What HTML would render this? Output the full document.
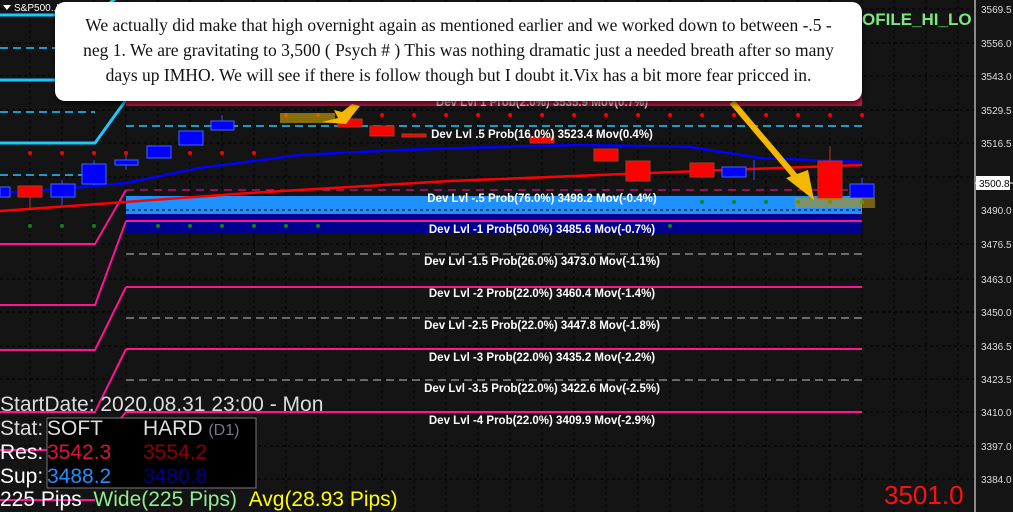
<!DOCTYPE html>
<html><head><style>
html,body{margin:0;padding:0;background:#141414;}
#w{position:relative;width:1013px;height:512px;overflow:hidden;background:#141414;font-family:"Liberation Sans",sans-serif;}
.t{position:absolute;white-space:nowrap;}
</style></head><body><div id="w">
<svg width="1013" height="512" style="position:absolute;left:0;top:0" font-family="Liberation Sans, sans-serif">
<g stroke="#000" stroke-width="1" stroke-dasharray="3,3">
<line x1="30" y1="0" x2="30" y2="512"/><line x1="62" y1="0" x2="62" y2="512"/><line x1="94" y1="0" x2="94" y2="512"/><line x1="126" y1="0" x2="126" y2="512"/><line x1="158" y1="0" x2="158" y2="512"/><line x1="190" y1="0" x2="190" y2="512"/><line x1="222" y1="0" x2="222" y2="512"/><line x1="254" y1="0" x2="254" y2="512"/><line x1="286" y1="0" x2="286" y2="512"/><line x1="318" y1="0" x2="318" y2="512"/><line x1="350" y1="0" x2="350" y2="512"/><line x1="382" y1="0" x2="382" y2="512"/><line x1="414" y1="0" x2="414" y2="512"/><line x1="446" y1="0" x2="446" y2="512"/><line x1="478" y1="0" x2="478" y2="512"/><line x1="510" y1="0" x2="510" y2="512"/><line x1="542" y1="0" x2="542" y2="512"/><line x1="574" y1="0" x2="574" y2="512"/><line x1="606" y1="0" x2="606" y2="512"/><line x1="638" y1="0" x2="638" y2="512"/><line x1="670" y1="0" x2="670" y2="512"/><line x1="702" y1="0" x2="702" y2="512"/><line x1="734" y1="0" x2="734" y2="512"/><line x1="766" y1="0" x2="766" y2="512"/><line x1="798" y1="0" x2="798" y2="512"/><line x1="830" y1="0" x2="830" y2="512"/><line x1="862" y1="0" x2="862" y2="512"/><line x1="894" y1="0" x2="894" y2="512"/><line x1="926" y1="0" x2="926" y2="512"/><line x1="958" y1="0" x2="958" y2="512"/>
<line x1="0" y1="9" x2="975" y2="9"/><line x1="0" y1="43" x2="975" y2="43"/><line x1="0" y1="76" x2="975" y2="76"/><line x1="0" y1="110" x2="975" y2="110"/><line x1="0" y1="143" x2="975" y2="143"/><line x1="0" y1="177" x2="975" y2="177"/><line x1="0" y1="244" x2="975" y2="244"/><line x1="0" y1="279" x2="975" y2="279"/><line x1="0" y1="312" x2="975" y2="312"/><line x1="0" y1="346" x2="975" y2="346"/><line x1="0" y1="379" x2="975" y2="379"/><line x1="0" y1="412" x2="975" y2="412"/><line x1="0" y1="446" x2="975" y2="446"/><line x1="0" y1="479" x2="975" y2="479"/>
</g>
<g stroke="#1ec8ff" stroke-width="3" fill="none">
<path d="M0,15 H95 L126,-10"/><path d="M0,80 H95 L126,50"/><path d="M0,143 H95 L126,100"/>
</g>
<g stroke="#1ec8ff" stroke-width="1.5" fill="none" stroke-dasharray="8,5">
<path d="M0,48 H95"/><path d="M0,112 H95"/><path d="M0,175 H95"/><path d="M126,126 H862"/>
</g>
<g stroke="#ff1493" stroke-width="2" fill="none">
<path d="M0,244 H95 L126,190"/><path d="M0,305 H95 L126,221"/><path d="M0,350 H95 L126,287"/><path d="M0,412 H95 L126,349"/><path d="M0,450 H95 L126,412"/><path d="M0,500 H95"/>
</g>
<rect x="126" y="196" width="736" height="18" fill="#1e90ff"/>
<rect x="126" y="214" width="736" height="20" fill="#000090"/>
<line x1="126" y1="221" x2="862" y2="221" stroke="#ff1493" stroke-width="2"/>
<line x1="126" y1="210" x2="862" y2="210" stroke="#000" stroke-dasharray="3,3"/>
<line x1="126" y1="190" x2="862" y2="190" stroke="#ff1493" stroke-dasharray="8,6"/>
<rect x="126" y="95" width="736" height="11" fill="#c0143c"/>
<g stroke="#ff1493" stroke-width="2"><line x1="126" y1="287" x2="862" y2="287"/><line x1="126" y1="349" x2="862" y2="349"/><line x1="126" y1="412" x2="862" y2="412"/></g>
<g stroke="#888" stroke-width="1.5" stroke-dasharray="8,5"><line x1="126" y1="254" x2="862" y2="254"/><line x1="126" y1="318" x2="862" y2="318"/><line x1="126" y1="380" x2="862" y2="380"/></g>
<g fill="#f00"><circle cx="30" cy="153" r="2"/><circle cx="62" cy="153" r="2"/><circle cx="94" cy="153" r="2"/><circle cx="126" cy="153" r="2"/><circle cx="158" cy="153" r="2"/><circle cx="190" cy="153" r="2"/><circle cx="222" cy="153" r="2"/><circle cx="254" cy="153" r="2"/><circle cx="286" cy="115" r="2"/><circle cx="318" cy="115" r="2"/><circle cx="382" cy="115" r="2"/><circle cx="414" cy="115" r="2"/><circle cx="446" cy="115" r="2"/><circle cx="478" cy="115" r="2"/><circle cx="510" cy="115" r="2"/><circle cx="542" cy="115" r="2"/><circle cx="574" cy="115" r="2"/><circle cx="606" cy="115" r="2"/><circle cx="638" cy="115" r="2"/><circle cx="670" cy="115" r="2"/><circle cx="702" cy="115" r="2"/><circle cx="734" cy="115" r="2"/><circle cx="766" cy="115" r="2"/><circle cx="798" cy="115" r="2"/><circle cx="830" cy="115" r="2"/><circle cx="862" cy="115" r="2"/></g>
<g fill="#0a8a0a"><circle cx="30" cy="226" r="2"/><circle cx="62" cy="226" r="2"/><circle cx="94" cy="226" r="2"/><circle cx="158" cy="226" r="2"/><circle cx="190" cy="226" r="2"/><circle cx="222" cy="226" r="2"/><circle cx="254" cy="226" r="2"/><circle cx="286" cy="226" r="2"/><circle cx="318" cy="226" r="2"/><circle cx="670" cy="226" r="2"/><circle cx="702" cy="202" r="2"/><circle cx="734" cy="202" r="2"/><circle cx="766" cy="202" r="2"/><circle cx="798" cy="202" r="2"/><circle cx="830" cy="202" r="2"/><circle cx="862" cy="202" r="2"/></g>
<path d="M0,193 L62,189 L126,183 L200,168 L300,155 L400,150 L500,147 L580,145 L690,147 L760,158 L862,162" stroke="#0000ff" stroke-width="2.5" fill="none"/>
<path d="M0,211 L126,202 L250,193 L350,187 L450,181 L550,177 L650,173 L750,169 L862,165" stroke="#ff0000" stroke-width="2.5" fill="none"/>
<g stroke="#3050ff" stroke-width="1"><line x1="62" y1="180" x2="62" y2="205"/><line x1="94" y1="160" x2="94" y2="185"/><line x1="126" y1="155" x2="126" y2="170"/><line x1="222" y1="115" x2="222" y2="130"/><line x1="754" y1="160" x2="754" y2="180"/><line x1="862" y1="178" x2="862" y2="197"/></g>
<g fill="#0000ff" stroke="#3a6aff"><rect x="0" y="187" width="10" height="10"/><rect x="51" y="184" width="24" height="13"/><rect x="82" y="164" width="24" height="20"/><rect x="115" y="160" width="23" height="5"/><rect x="147" y="146" width="24" height="12"/><rect x="179" y="131" width="24" height="14"/><rect x="211" y="121" width="23" height="9"/><rect x="722" y="167" width="24" height="10"/><rect x="850" y="184" width="24" height="14"/></g>
<g fill="#ff0000" stroke="#a04020"><line x1="30" y1="190" x2="30" y2="210"/><rect x="18" y="186" width="24" height="11"/><rect x="338" y="119" width="24" height="8"/><rect x="370" y="126" width="24" height="10"/><rect x="402" y="134" width="24" height="3"/><rect x="530" y="137" width="24" height="6"/><rect x="594" y="149" width="24" height="12"/><rect x="626" y="161" width="24" height="20"/><rect x="690" y="163" width="24" height="14"/><rect x="818" y="161" width="24" height="38"/><line x1="830" y1="146" x2="830" y2="161"/></g>
<rect x="280" y="113" width="55" height="10" fill="#b8960a" opacity="0.7"/>
<rect x="795" y="198" width="80" height="10" fill="#b8960a" opacity="0.6"/>
<path d="M352,104 L342,112 L334,110 L338,118 L322,122 L346,124 L352,116 L360,106 Z" fill="#f5b800"/>
<line x1="732" y1="102" x2="800" y2="182" stroke="#f5b800" stroke-width="6"/>
<path d="M786,178 L814,200 L808,170 Z" fill="#f5b800"/>
<line x1="975" y1="0" x2="975" y2="512" stroke="#fff"/>
<g fill="#ddd" font-size="10"><text x="981" y="13">3569.5</text><text x="981" y="47">3556.0</text><text x="981" y="80">3543.0</text><text x="981" y="114">3529.5</text><text x="981" y="147">3516.5</text><text x="981" y="214">3490.0</text><text x="981" y="248">3476.5</text><text x="981" y="283">3463.0</text><text x="981" y="316">3450.0</text><text x="981" y="350">3436.5</text><text x="981" y="383">3423.5</text><text x="981" y="416">3410.0</text><text x="981" y="450">3397.0</text><text x="981" y="483">3384.0</text></g>
<line x1="975" y1="183" x2="1013" y2="183" stroke="#fff"/>
<rect x="976" y="176" width="34" height="14" fill="#fff"/>
<text x="979" y="187" font-size="10" fill="#000">3500.8</text>
<g fill="#fff" font-size="11.5" font-weight="bold" text-anchor="middle">
<text x="542" y="106" fill="#e0c0c8">Dev Lvl 1 Prob(2.0%) 3535.9 Mov(0.7%)</text>
<text x="542" y="138">Dev Lvl .5 Prob(16.0%) 3523.4 Mov(0.4%)</text>
<text x="542" y="202">Dev Lvl -.5 Prob(76.0%) 3498.2 Mov(-0.4%)</text>
<text x="542" y="233">Dev Lvl -1 Prob(50.0%) 3485.6 Mov(-0.7%)</text>
<text x="542" y="265">Dev Lvl -1.5 Prob(26.0%) 3473.0 Mov(-1.1%)</text>
<text x="542" y="297">Dev Lvl -2 Prob(22.0%) 3460.4 Mov(-1.4%)</text>
<text x="542" y="329">Dev Lvl -2.5 Prob(22.0%) 3447.8 Mov(-1.8%)</text>
<text x="542" y="361">Dev Lvl -3 Prob(22.0%) 3435.2 Mov(-2.2%)</text>
<text x="542" y="392">Dev Lvl -3.5 Prob(22.0%) 3422.6 Mov(-2.5%)</text>
<text x="542" y="424">Dev Lvl -4 Prob(22.0%) 3409.9 Mov(-2.9%)</text>
</g>
<text x="862" y="25" fill="#7ee87e" font-size="17" font-weight="bold">OFILE_HI_LO</text>
<path d="M3,5 L11,5 L7,10 Z" fill="#fff"/>
<text x="14" y="11" fill="#fff" font-size="10">S&amp;P500.,H</text>
<rect x="47" y="418" width="209" height="70" fill="#000" stroke="#777"/>
</svg>
<div style="position:absolute;left:55px;top:2px;width:807px;height:99px;background:#fff;border-radius:10px;box-shadow:0 3px 4px rgba(0,0,0,0.6);font-family:'Liberation Serif',serif;font-size:17.5px;line-height:25px;color:#111;text-align:center;padding-top:11px;box-sizing:border-box;">We actually did make that high overnight again as mentioned earlier and we worked down to between -.5 -<br>neg 1. We are gravitating to 3,500 ( Psych # ) This was nothing dramatic just a needed breath after so many<br>days up IMHO. We will see if there is follow though but I doubt it.Vix has a bit more fear pricced in.</div>
<div class="t" style="left:0;top:393px;font-size:21px;color:#ddd">StartDate: 2020.08.31 23:00 - Mon</div>
<div class="t" style="left:0;top:417px;font-size:21px;color:#ddd">Stat:</div>
<div class="t" style="left:47px;top:417px;font-size:21px;color:#ddd">SOFT</div>
<div class="t" style="left:143px;top:417px;font-size:21px;color:#ddd">HARD <span style="color:#778;font-size:16px">(D1)</span></div>
<div class="t" style="left:0;top:441px;font-size:21px;color:#fff">Res:</div>
<div class="t" style="left:47px;top:441px;font-size:21px;color:#dc143c">3542.3</div>
<div class="t" style="left:143px;top:441px;font-size:21px;color:#8b0000">3554.2</div>
<div class="t" style="left:0;top:465px;font-size:21px;color:#fff">Sup:</div>
<div class="t" style="left:47px;top:465px;font-size:21px;color:#1e90ff">3488.2</div>
<div class="t" style="left:143px;top:465px;font-size:21px;color:#00008b">3480.8</div>
<div class="t" style="left:0;top:488px;font-size:21px;color:#fff">225 Pips <span style="color:#90ee90">&nbsp;Wide(225 Pips)</span> <span style="color:#ffff00">&nbsp;Avg(28.93 Pips)</span></div>
<div class="t" style="left:884px;top:480px;font-size:26px;color:#ff1010">3501.0</div>
</div></body></html>
